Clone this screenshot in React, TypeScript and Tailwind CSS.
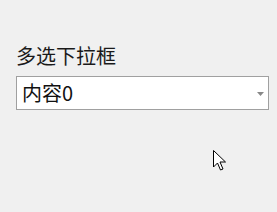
import React from 'react'

export default function App() {
  return (
    <div
      className="relative h-[212px] w-[277px] overflow-hidden bg-[#f0f0f0]"
      style={{ fontFamily: '"Microsoft YaHei", "Noto Sans CJK SC", sans-serif' }}
    >
      <div className="flex flex-col px-4 pt-[44px]">
        <div className="text-[20px] leading-[24px] text-[#1a1a1a]">多选下拉框</div>
        <div className="mt-[8px] flex h-[34px] w-[253px] items-center justify-between border border-[#a0a0a0] bg-white pl-[5px] pr-[4px]">
          <span className="text-[20px] leading-[24px] text-[#111]">内容0</span>
          <svg width="7" height="4" viewBox="0 0 7 4" className="mt-[2px]">
            <path d="M0 0 H7 L3.5 4 Z" fill="#888" />
          </svg>
        </div>
      </div>

      {/* mouse cursor */}
      <svg
        className="absolute left-[213px] top-[150px]"
        width="14"
        height="24"
        viewBox="0 0 14 24"
      >
        <path
          d="M0.5 0.5 L0.5 17 L4.5 13 L7.5 20 L10 19 L7 12 L12.5 12 Z"
          fill="#fff"
          stroke="#000"
          strokeWidth="1"
          strokeLinejoin="miter"
        />
      </svg>
    </div>
  )
}
